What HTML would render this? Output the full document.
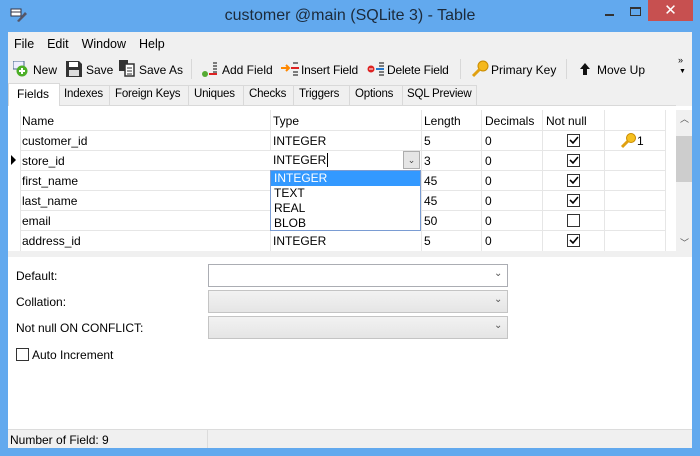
<!DOCTYPE html>
<html><head><style>
*{margin:0;padding:0;box-sizing:border-box}
body{width:700px;height:456px;background:#62a9ee;font-family:"Liberation Sans",sans-serif;font-size:12px;color:#000;position:relative;overflow:hidden}
.a{position:absolute}
.t{white-space:nowrap}
</style></head><body>
<div class="a" style="left:10px;top:7px;width:18px;height:16px">
<svg width="18" height="16"><rect x="1" y="2" width="10" height="7" fill="#fff" stroke="#334"/><line x1="1" y1="5" x2="11" y2="5" stroke="#334"/><path d="M7 14 L15 5 L17 7 L9 15 Z" fill="#556" /></svg></div>
<div class="a t" style="left:0;width:700px;top:7px;text-align:center;font-size:16px;color:#1c2a3a">customer @main (SQLite 3) - Table</div>
<div class="a" style="left:605px;top:14px;width:9px;height:2px;background:#333"></div>
<div class="a" style="left:630px;top:7px;width:11px;height:9px;border:1px solid #333;border-top-width:2px"></div>
<div class="a" style="left:648px;top:0;width:45px;height:21px;background:#c75050;color:#fff;text-align:center;font-size:15px;line-height:21px">✕</div>
<div class="a" style="left:8px;top:32px;width:684px;height:398px;background:#f0f0f0"></div>
<div class="a t" style="left:14px;top:37px;font-size:12.5px;word-spacing:3px">File&nbsp; Edit&nbsp; Window&nbsp; Help</div>
<!-- toolbar -->
<div class="a" style="left:13px;top:61px"><svg width="18" height="16"><rect x="0" y="0" width="11" height="8" fill="#eef" stroke="#468"/><circle cx="9" cy="10" r="5.5" fill="#4caf27"/><path d="M9 7v6M6 10h6" stroke="#fff" stroke-width="2"/></svg></div>
<div class="a t" style="left:33px;top:63px">New</div>
<div class="a" style="left:66px;top:61px"><svg width="16" height="16"><path d="M0 0h13l3 3v13H0z" fill="#333"/><rect x="3" y="1" width="9" height="5" fill="#fff"/><rect x="3" y="9" width="10" height="6" fill="#ddd"/></svg></div>
<div class="a t" style="left:86px;top:63px">Save</div>
<div class="a" style="left:119px;top:60px"><svg width="16" height="17"><rect x="0" y="0" width="9" height="11" fill="#333"/><rect x="6" y="4" width="9" height="12" fill="#fff" stroke="#333" stroke-width="1.5"/><path d="M8 8h5M8 11h5M8 14h5" stroke="#333"/></svg></div>
<div class="a t" style="left:139px;top:63px">Save As</div>
<div class="a" style="left:191px;top:59px;width:1px;height:20px;background:#d8d8d8"></div>
<div class="a" style="left:201px;top:62px"><svg width="18" height="16"><circle cx="4" cy="12" r="3" fill="#5a3"/><path d="M8 12h8" stroke="#d22" stroke-width="2"/><path d="M12 1h4M12 4h4M12 7h4M12 10h4" stroke="#555" stroke-width="1.5"/></svg></div>
<div class="a t" style="left:222px;top:63px">Add Field</div>
<div class="a" style="left:281px;top:62px"><svg width="18" height="16"><path d="M0 6h7M5 3l3 3-3 3" stroke="#f80" stroke-width="2" fill="none"/><path d="M10 6h8" stroke="#d22" stroke-width="2"/><path d="M12 1h5M12 10h5M12 13h5" stroke="#555" stroke-width="1.5"/></svg></div>
<div class="a t" style="left:301px;top:63px;letter-spacing:-0.2px">Insert Field</div>
<div class="a" style="left:367px;top:62px"><svg width="18" height="16"><circle cx="4" cy="7" r="3.5" fill="#d22"/><path d="M2 7h4" stroke="#fff"/><path d="M9 7h8" stroke="#27c" stroke-width="2"/><path d="M12 1h5M12 4h5M12 10h5M12 13h5" stroke="#555" stroke-width="1.5"/></svg></div>
<div class="a t" style="left:387px;top:63px;letter-spacing:-0.2px">Delete Field</div>
<div class="a" style="left:460px;top:59px;width:1px;height:20px;background:#d8d8d8"></div>
<div class="a" style="left:471px;top:60px"><svg width="18" height="18"><circle cx="12" cy="6" r="5" fill="#f5b81c" stroke="#c88a00"/><path d="M9 9L2 16" stroke="#e0a010" stroke-width="3"/></svg></div>
<div class="a t" style="left:491px;top:63px">Primary Key</div>
<div class="a" style="left:566px;top:59px;width:1px;height:20px;background:#d8d8d8"></div>
<div class="a" style="left:579px;top:63px"><svg width="12" height="12"><path d="M6 0L11 6H8v6H4V6H1z" fill="#111"/></svg></div>
<div class="a t" style="left:597px;top:63px">Move Up</div>
<div class="a t" style="left:678px;top:55px;font-size:9px">»</div>
<div class="a t" style="left:679px;top:68px;font-size:7px">▼</div>
<!-- tabs -->
<div class="a" style="left:8px;top:105px;width:668px;height:1px;background:#d9d9d9"></div>
<div class="a" style="left:59px;top:85px;width:418px;height:20px;background:#f0f0f0;border:1px solid #d9d9d9;border-bottom:none"></div>
<div class="a t" style="left:8px;top:83px;width:52px;height:23px;background:#fff;border:1px solid #d9d9d9;border-bottom:none;padding:3px 0 0 8px">Fields</div>
<div class="a t" style="left:59px;top:88px;font-size:11.5px;letter-spacing:-0.2px">
<span style="position:absolute;left:5px">Indexes</span><span style="position:absolute;left:50px;width:1px;height:20px;top:-3px;background:#d9d9d9"></span>
<span style="position:absolute;left:56px">Foreign Keys</span><span style="position:absolute;left:129px;width:1px;height:20px;top:-3px;background:#d9d9d9"></span>
<span style="position:absolute;left:135px">Uniques</span><span style="position:absolute;left:184px;width:1px;height:20px;top:-3px;background:#d9d9d9"></span>
<span style="position:absolute;left:190px">Checks</span><span style="position:absolute;left:234px;width:1px;height:20px;top:-3px;background:#d9d9d9"></span>
<span style="position:absolute;left:240px">Triggers</span><span style="position:absolute;left:290px;width:1px;height:20px;top:-3px;background:#d9d9d9"></span>
<span style="position:absolute;left:296px">Options</span><span style="position:absolute;left:343px;width:1px;height:20px;top:-3px;background:#d9d9d9"></span>
<span style="position:absolute;left:348px">SQL Preview</span>
</div>
<!-- grid -->
<div class="a" style="left:8px;top:106px;width:684px;height:324px;background:#fff"></div>
<div class="a" style="left:8px;top:251px;width:684px;height:6px;background:#f0f0f0"></div>
<div class="a" style="left:676px;top:110px;width:16px;height:141px;background:#f0f0f0"></div>
<div class="a" style="left:676px;top:136px;width:16px;height:46px;background:#cdcdcd"></div>
<div class="a t" style="left:680px;top:112px;font-size:9px;color:#555">︿</div>
<div class="a t" style="left:680px;top:236px;font-size:9px;color:#555">﹀</div>
<svg class="a" style="left:0;top:0" width="700" height="456">
<g stroke="#e6e6e6" stroke-width="1">
<path d="M20.5 110v141M270.5 110v141M421.5 110v141M481.5 110v141M542.5 110v141M604.5 110v141M665.5 110v141"/>
<path d="M20 130.5h646M20 150.5h646M20 170.5h646M20 190.5h646M20 210.5h646M20 230.5h646"/>
</g>
<path d="M11 155l5 5-5 5z" fill="#000"/>
</svg>
<div class="a t" style="left:0;top:111px;line-height:20px">
<div class="a" style="left:22px">Name</div><div class="a" style="left:273px">Type</div><div class="a" style="left:424px">Length</div><div class="a" style="left:485px">Decimals</div><div class="a" style="left:546px">Not null</div>
</div>
<div class="a t" style="left:0;top:131px;line-height:20px">
<div class="a" style="left:22px;top:0">customer_id</div><div class="a" style="left:273px;top:0">INTEGER</div><div class="a" style="left:424px;top:0">5</div><div class="a" style="left:485px;top:0">0</div>
<div class="a" style="left:22px;top:20px">store_id</div><div class="a" style="left:424px;top:20px">3</div><div class="a" style="left:485px;top:20px">0</div>
<div class="a" style="left:22px;top:40px">first_name</div><div class="a" style="left:424px;top:40px">45</div><div class="a" style="left:485px;top:40px">0</div>
<div class="a" style="left:22px;top:60px">last_name</div><div class="a" style="left:424px;top:60px">45</div><div class="a" style="left:485px;top:60px">0</div>
<div class="a" style="left:22px;top:80px">email</div><div class="a" style="left:424px;top:80px">50</div><div class="a" style="left:485px;top:80px">0</div>
<div class="a" style="left:22px;top:100px">address_id</div><div class="a" style="left:273px;top:100px">INTEGER</div><div class="a" style="left:424px;top:100px">5</div><div class="a" style="left:485px;top:100px">0</div>
</div>
<div class="a" style="left:270px;top:151px;width:151px;height:19px;background:#fff"></div>
<div class="a t" style="left:273px;top:153px">INTEGER<span style="border-left:1px solid #000;margin-left:1px"></span></div>
<div class="a" style="left:403px;top:151px;width:17px;height:18px;background:#e5e5e5;border:1px solid #acacac;font-size:9px;text-align:center;line-height:16px;color:#444">⌄</div>
<div class="a" style="left:270px;top:170px;width:151px;height:61px;background:#fff;border:1px solid #7a9cd3"></div>
<div class="a t" style="left:271px;top:171px;width:149px;height:15px;background:#3399ff;color:#fff;padding-left:3px;line-height:15px">INTEGER</div>
<div class="a t" style="left:274px;top:186px;line-height:15px">TEXT<br>REAL<br>BLOB</div>
<svg class="a" style="left:0;top:0" width="700" height="456">
<g fill="#fff" stroke="#333"><rect x="567.5" y="134.5" width="12" height="12"/><rect x="567.5" y="154.5" width="12" height="12"/><rect x="567.5" y="174.5" width="12" height="12"/><rect x="567.5" y="194.5" width="12" height="12"/><rect x="567.5" y="214.5" width="12" height="12"/><rect x="567.5" y="234.5" width="12" height="12"/></g>
<g fill="none" stroke="#000" stroke-width="1.6"><path d="M570 140l3 3 5-6M570 160l3 3 5-6M570 180l3 3 5-6M570 200l3 3 5-6M570 240l3 3 5-6"/></g>
<circle cx="631" cy="138" r="4.5" fill="#f5c020" stroke="#c88a00"/><path d="M628 141l-6 6" stroke="#e0a010" stroke-width="3"/>
</svg>
<div class="a t" style="left:637px;top:134px">1</div>
<!-- form -->
<div class="a t" style="left:16px;top:269px">Default:</div>
<div class="a t" style="left:16px;top:295px">Collation:</div>
<div class="a t" style="left:16px;top:321px">Not null ON CONFLICT:</div>
<div class="a" style="left:208px;top:264px;width:300px;height:23px;background:#fff;border:1px solid #abadb3"></div>
<div class="a" style="left:208px;top:290px;width:300px;height:23px;background:linear-gradient(#f2f2f2,#e5e5e5);border:1px solid #c4c4c4"></div>
<div class="a" style="left:208px;top:316px;width:300px;height:23px;background:linear-gradient(#f2f2f2,#e5e5e5);border:1px solid #c4c4c4"></div>
<div class="a" style="left:494px;top:268px;font-size:10px;color:#555">⌄</div>
<div class="a" style="left:494px;top:294px;font-size:10px;color:#555">⌄</div>
<div class="a" style="left:494px;top:320px;font-size:10px;color:#555">⌄</div>
<div class="a" style="left:16px;top:348px;width:13px;height:13px;border:1px solid #333;background:#fff"></div>
<div class="a t" style="left:32px;top:348px">Auto Increment</div>
<!-- status -->
<div class="a" style="left:8px;top:429px;width:684px;height:19px;background:#f0f0f0;border-top:1px solid #dcdcdc"></div>
<div class="a" style="left:207px;top:430px;width:1px;height:18px;background:#dcdcdc"></div>
<div class="a t" style="left:10px;top:433px">Number of Field: 9</div>
</body></html>
